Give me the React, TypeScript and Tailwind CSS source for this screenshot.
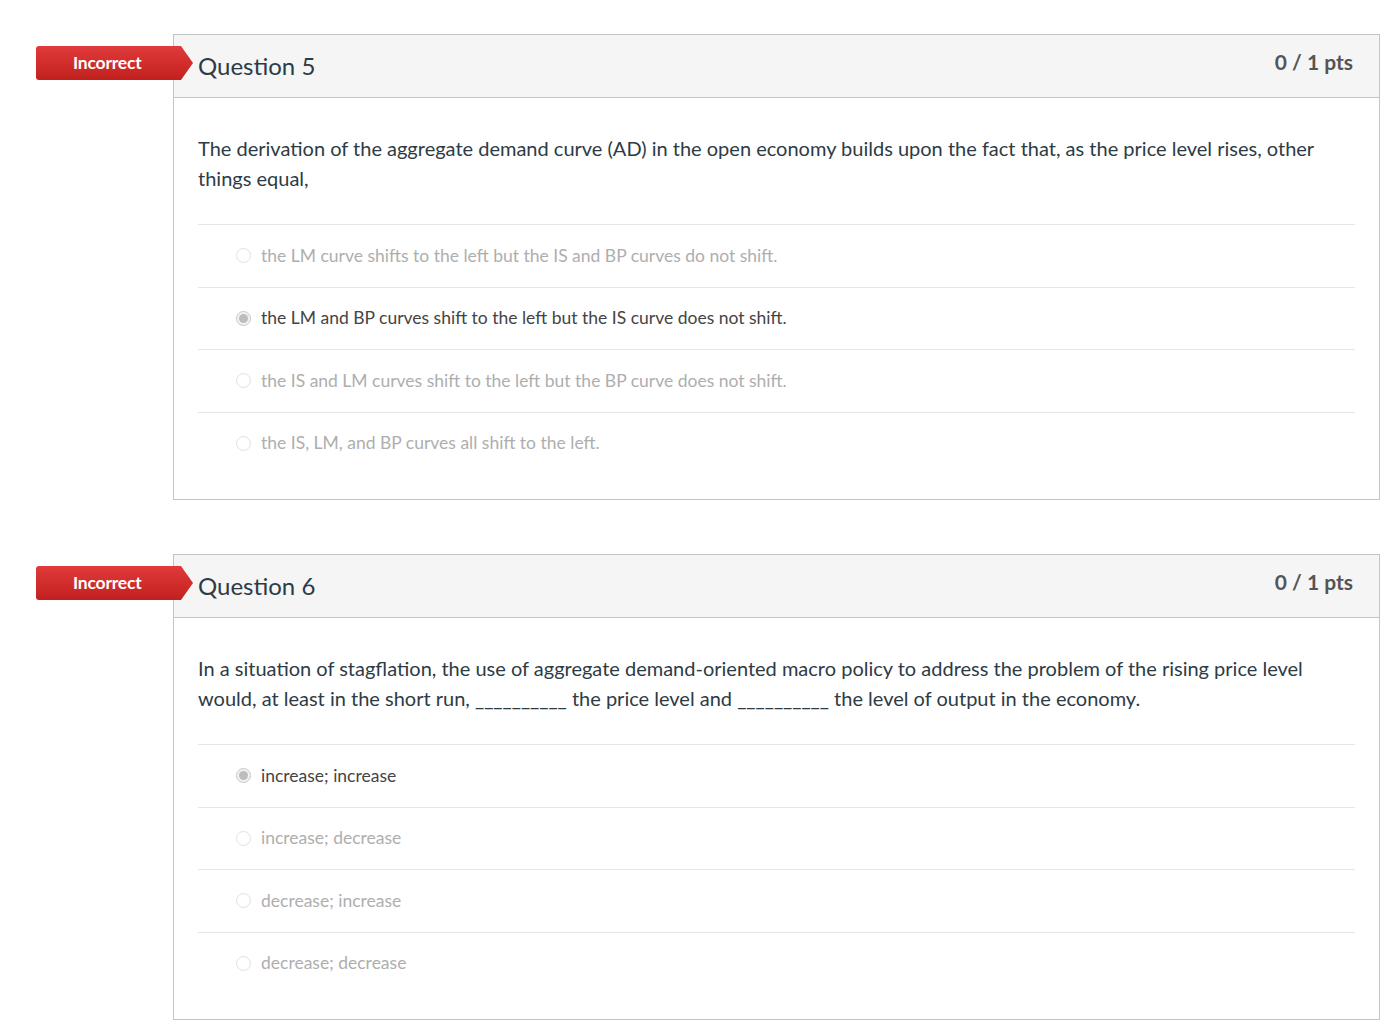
import React from "react";

type Question = {
  id: number;
  text: React.ReactNode;
  answers: string[];
  selected: number;
};

const questions: Question[] = [
  {
    id: 5,
    text: (
      <>
        The derivation of the aggregate demand curve (AD) in the open economy builds upon the fact that, as the price
        level rises, other things equal,
      </>
    ),
    answers: [
      "the LM curve shifts to the left but the IS and BP curves do not shift.",
      "the LM and BP curves shift to the left but the IS curve does not shift.",
      "the IS and LM curves shift to the left but the BP curve does not shift.",
      "the IS, LM, and BP curves all shift to the left.",
    ],
    selected: 1,
  },
  {
    id: 6,
    text: (
      <>
        In a situation of stagflation, the use of aggregate demand-oriented macro policy to address the problem of the
        rising price level would, at least in the short run, __________ the price level and __________ the level of
        output in the economy.
      </>
    ),
    answers: ["increase; increase", "increase; decrease", "decrease; increase", "decrease; decrease"],
    selected: 0,
  },
];

function Radio({ checked }: { checked: boolean }) {
  if (checked) {
    return (
      <span className="flex h-[15px] w-[15px] shrink-0 items-center justify-center rounded-full border border-[#c8c8c8] bg-[#f2f2f2]">
        <span className="h-[9px] w-[9px] rounded-full bg-[#bdbdbd]" />
      </span>
    );
  }
  return <span className="h-[15px] w-[15px] shrink-0 rounded-full border border-[#e2e2e2] bg-white" />;
}

function IncorrectBadge() {
  return (
    <div className="absolute left-[-138px] top-[11px] flex h-[34px] w-[157px] items-center rounded-l-[3px] bg-gradient-to-b from-[#e03a3a] to-[#c21f1f] pl-[37px] text-[17.5px] font-bold tracking-[-0.2px] text-white [clip-path:polygon(0_0,calc(100%-12px)_0,100%_50%,calc(100%-12px)_100%,0_100%)]">
      Incorrect
    </div>
  );
}

function QuestionCard({ q }: { q: Question }) {
  return (
    <div className="relative w-[1207px] border border-[#c4c4c4] bg-white">
      <IncorrectBadge />
      <div className="flex h-[63px] items-start justify-between border-b border-[#c4c4c4] bg-[#f5f5f5] pl-[24px] pr-[26px]">
        <h2 className="pt-[16px] text-[24px] font-normal leading-[30px] text-[#2d3b45]">Question {q.id}</h2>
        <span className="pt-[12px] text-[21px] font-bold leading-[30px] text-[#555]">0 / 1 pts</span>
      </div>
      <div className="px-[24px] pb-[25px] pt-[35px]">
        <p className="pb-[31px] text-[20px] leading-[30px] text-[#2d3b45]">{q.text}</p>
        <ul>
          {q.answers.map((a, i) => (
            <li
              key={a}
              className={`flex h-[62.5px] items-center gap-[10px] border-t border-[#e6e6e6] pl-[38px] text-[17.5px] ${
                i === q.selected ? "text-[#444]" : "text-[#aeaeae]"
              }`}
            >
              <Radio checked={i === q.selected} />
              <span>{a}</span>
            </li>
          ))}
        </ul>
      </div>
    </div>
  );
}

export default function App() {
  return (
    <div className="min-h-screen bg-white pl-[173px] pt-[34px] font-['Lato','Noto_Sans',sans-serif]">
      <div className="flex flex-col gap-[54px]">
        {questions.map((q) => (
          <QuestionCard key={q.id} q={q} />
        ))}
      </div>
    </div>
  );
}
